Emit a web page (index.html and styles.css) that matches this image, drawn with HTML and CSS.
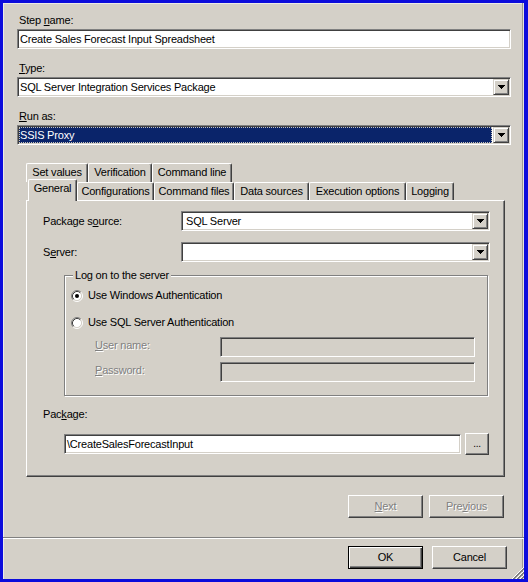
FILE: index.html
```html
<!DOCTYPE html>
<html>
<head>
<meta charset="utf-8">
<title>New Job Step</title>
<link rel="stylesheet" href="styles.css">
</head>
<body>
<div class="window">
  <div class="main">
    <div class="field">
      <span class="lbl">Step <u>n</u>ame:</span>
      <div class="sunken textbox">Create Sales Forecast Input Spreadsheet</div>
    </div>
    <div class="field">
      <span class="lbl"><u>T</u>ype:</span>
      <div class="sunken combo wide">
        <span class="ctext">SQL Server Integration Services Package</span>
        <span class="cbtn"><svg width="7" height="4" viewBox="0 0 7 4"><path d="M0 0h7v1H0zM1 1h5v1H1zM2 2h3v1H2zM3 3h1v1H3z" fill="#000"/></svg></span>
      </div>
    </div>
    <div class="field">
      <span class="lbl"><u>R</u>un as:</span>
      <div class="sunken combo wide">
        <span class="ctext focused">SSIS Proxy</span>
        <span class="cbtn"><svg width="7" height="4" viewBox="0 0 7 4"><path d="M0 0h7v1H0zM1 1h5v1H1zM2 2h3v1H2zM3 3h1v1H3z" fill="#000"/></svg></span>
      </div>
    </div>

    <div class="tabs">
      <div class="tabrow back">
        <span class="tab w62">Set values</span>
        <span class="tab w64">Verification</span>
        <span class="tab w80">Command line</span>
      </div>
      <div class="tabrow front">
        <span class="tab sel w49">General</span>
        <span class="tab w77">Configurations</span>
        <span class="tab w80">Command files</span>
        <span class="tab w75">Data sources</span>
        <span class="tab w97">Execution options</span>
        <span class="tab w48">Logging</span>
      </div>
      <div class="panel">
        <div class="prow">
          <span class="plbl">Package s<u>o</u>urce:</span>
          <div class="sunken combo pcombo">
            <span class="ctext">SQL Server</span>
            <span class="cbtn"><svg width="7" height="4" viewBox="0 0 7 4"><path d="M0 0h7v1H0zM1 1h5v1H1zM2 2h3v1H2zM3 3h1v1H3z" fill="#000"/></svg></span>
          </div>
        </div>
        <div class="prow second">
          <span class="plbl">S<u>e</u>rver:</span>
          <div class="sunken combo pcombo">
            <span class="ctext"></span>
            <span class="cbtn"><svg width="7" height="4" viewBox="0 0 7 4"><path d="M0 0h7v1H0zM1 1h5v1H1zM2 2h3v1H2zM3 3h1v1H3z" fill="#000"/></svg></span>
          </div>
        </div>

        <fieldset class="group">
          <legend>Log on to the server</legend>
          <div class="radio first">
            <svg width="12" height="12" viewBox="0 0 12 12">
              <circle cx="6" cy="6" r="4.5" fill="#fff"/>
              <path d="M2.11 9.89A5.5 5.5 0 0 1 9.89 2.11" fill="none" stroke="#808080"/>
              <path d="M9.89 2.11A5.5 5.5 0 0 1 2.11 9.89" fill="none" stroke="#fff"/>
              <path d="M2.82 9.18A4.5 4.5 0 0 1 9.18 2.82" fill="none" stroke="#404040"/>
              <path d="M9.18 2.82A4.5 4.5 0 0 1 2.82 9.18" fill="none" stroke="#d4d0c8"/>
              <circle cx="6" cy="6" r="2" fill="#000"/>
            </svg>
            <span>Use Windows Authentication</span>
          </div>
          <div class="radio next">
            <svg width="12" height="12" viewBox="0 0 12 12">
              <circle cx="6" cy="6" r="4.5" fill="#fff"/>
              <path d="M2.11 9.89A5.5 5.5 0 0 1 9.89 2.11" fill="none" stroke="#808080"/>
              <path d="M9.89 2.11A5.5 5.5 0 0 1 2.11 9.89" fill="none" stroke="#fff"/>
              <path d="M2.82 9.18A4.5 4.5 0 0 1 9.18 2.82" fill="none" stroke="#404040"/>
              <path d="M9.18 2.82A4.5 4.5 0 0 1 2.82 9.18" fill="none" stroke="#d4d0c8"/>
            </svg>
            <span>Use SQL Server Authentication</span>
          </div>
          <div class="cred first">
            <span class="clbl disabled"><u>U</u>ser name:</span>
            <div class="sunken cinput"></div>
          </div>
          <div class="cred next">
            <span class="clbl disabled"><u>P</u>assword:</span>
            <div class="sunken cinput"></div>
          </div>
        </fieldset>

        <div class="pkglbl">Pac<u>k</u>age:</div>
        <div class="pkgrow">
          <div class="sunken pkginput">\CreateSalesForecastInput</div>
          <span class="btn browse">...</span>
        </div>
      </div>
    </div>

    <div class="nav">
      <span class="btn disabled"><span><u>N</u>ext</span></span>
      <span class="btn disabled"><span>Pre<u>v</u>ious</span></span>
    </div>
  </div>

  <div class="sep"></div>

  <div class="footer">
    <span class="btn default">OK</span>
    <span class="btn">Cancel</span>
  </div>

  <svg class="grip" width="13" height="13" viewBox="0 0 13 13">
    <g stroke-width="1">
      <line x1="1" y1="13" x2="13" y2="1" stroke="#fff"/>
      <line x1="2" y1="13" x2="13" y2="2" stroke="#808080"/>
      <line x1="3" y1="13" x2="13" y2="3" stroke="#808080"/>
      <line x1="5" y1="13" x2="13" y2="5" stroke="#fff"/>
      <line x1="6" y1="13" x2="13" y2="6" stroke="#808080"/>
      <line x1="7" y1="13" x2="13" y2="7" stroke="#808080"/>
      <line x1="9" y1="13" x2="13" y2="9" stroke="#fff"/>
      <line x1="10" y1="13" x2="13" y2="10" stroke="#808080"/>
      <line x1="11" y1="13" x2="13" y2="11" stroke="#808080"/>
    </g>
  </svg>
</div>
</body>
</html>
```

FILE: styles.css
```css
* { box-sizing: border-box; }

body {
  margin: 0;
  font-family: "Liberation Sans", Arial, sans-serif;
  font-size: 11px;
  line-height: 13px;
  letter-spacing: -0.2px;
  color: #000;
  background: #d4d0c8;
}

.window {
  position: relative;
  width: 528px;
  height: 582px;
  background: #d4d0c8;
  border-style: solid;
  border-color: #0c0cdc;
  border-width: 3px 4px 3px 3px;
  box-shadow: inset -1px 0 0 #e6e4e0, inset -2px 0 0 #9c9a96, inset 1px 1px 0 #ecebe7;
  overflow: hidden;
}

.main {
  padding: 11px 0 0 14px;
}

.field + .field { margin-top: 13px; }

.lbl {
  display: block;
  height: 13px;
  margin: 0 0 2px 2px;
  white-space: nowrap;
}

.sunken {
  height: 20px;
  border: 1px solid;
  border-color: #808080 #fff #fff #808080;
  box-shadow: inset 1px 1px 0 #404040, inset -1px -1px 0 #d4d0c8;
  background: #fff;
  display: flex;
  align-items: center;
  white-space: nowrap;
}

.textbox { width: 494px; padding-left: 2px; }

.combo { padding: 1px; align-items: stretch; }
.wide { width: 494px; }

.ctext {
  flex: 1;
  padding-left: 1px;
  display: flex;
  align-items: center;
}

.ctext.focused {
  background: #0a246a;
  color: #fff;
  border: 1px dotted #c8c4bc;
  padding-left: 0;
  margin-right: 1px;
}

.cbtn {
  width: 16px;
  height: 16px;
  flex: none;
  background: #d4d0c8;
  border: 1px solid;
  border-color: #d4d0c8 #404040 #404040 #d4d0c8;
  box-shadow: inset 1px 1px 0 #fff, inset -1px -1px 0 #808080;
  display: flex;
  align-items: center;
  justify-content: center;
}
.cbtn svg { display: block; }

/* Tabs */
.tabs {
  margin: 18px 0 0 9px;
  width: 479px;
}

.tabrow { display: flex; }
.tabrow.back { height: 19px; }
.tabrow.front { height: 18px; padding-left: 2px; }

.tab {
  height: 100%;
  flex: none;
  background: #d4d0c8;
  border-top: 1px solid #fff;
  border-left: 1px solid #fff;
  border-right: 1px solid #404040;
  box-shadow: inset -1px 0 0 #808080;
  border-radius: 2px 2px 0 0;
  padding-top: 2px;
  text-align: center;
  white-space: nowrap;
}

.tab.sel {
  height: 22px;
  margin-top: -3px;
  position: relative;
  z-index: 1;
}

.w48 { width: 48px; }
.w49 { width: 49px; }
.w62 { width: 62px; }
.w64 { width: 64px; }
.w75 { width: 75px; }
.w77 { width: 77px; }
.w80 { width: 80px; }
.w97 { width: 97px; }

.panel {
  border: 1px solid;
  border-color: #fff #404040 #404040 #fff;
  box-shadow: inset -1px -1px 0 #808080;
  padding: 10px 0 21px 16px;
}

.prow {
  display: flex;
  align-items: center;
  height: 20px;
}
.prow.second { margin-top: 11px; }

.plbl { width: 138px; white-space: nowrap; }
.pcombo { width: 309px; }
.pcombo .ctext { padding-left: 3px; }

.group {
  margin: 7px 0 0 21px;
  width: 424px;
  min-width: 0;
  padding: 0 0 13px 0;
  border: 1px solid #808080;
  box-shadow: 1px 1px 0 #fff, inset 1px 1px 0 #fff;
}

.group legend {
  margin-left: 8px;
  padding: 0 2px;
  background: #d4d0c8;
  line-height: 13px;
}

.radio {
  display: flex;
  align-items: center;
  gap: 5px;
  height: 13px;
  margin-left: 6px;
}
.radio svg { display: block; flex: none; }
.radio.first { margin-top: 7px; }
.radio.next { margin-top: 14px; }

.cred {
  display: flex;
  align-items: flex-start;
  margin-left: 30px;
}
.cred.first { margin-top: 8px; }
.cred.next { margin-top: 5px; }

.clbl { width: 125px; margin-top: 2px; white-space: nowrap; }
.cinput { width: 255px; background: #d4d0c8; }

.disabled {
  color: #808080;
  text-shadow: 1px 1px 0 #fff;
}

.pkglbl { margin-top: 12px; height: 13px; }

.pkgrow {
  display: flex;
  align-items: center;
  gap: 4px;
  height: 22px;
  margin: 12px 0 0 21px;
}

.pkginput { width: 397px; padding-left: 2px; }

/* Buttons */
.btn {
  width: 75px;
  height: 23px;
  flex: none;
  background: #d4d0c8;
  border: 1px solid;
  border-color: #fff #404040 #404040 #fff;
  box-shadow: inset -1px -1px 0 #808080;
  display: flex;
  align-items: center;
  justify-content: center;
  white-space: nowrap;
}

.btn.browse {
  width: 24px;
  height: 22px;
  font-size: 10px;
  padding-bottom: 2px;
}

.btn.default {
  border-color: #000;
  box-shadow: inset 1px 1px 0 #fff, inset -1px -1px 0 #404040, inset -2px -2px 0 #808080;
}

.nav {
  display: flex;
  justify-content: flex-end;
  gap: 6px;
  width: 487px;
  margin-top: 18px;
}

.sep {
  margin-top: 19px;
  height: 2px;
  border-top: 1px solid #808080;
  border-bottom: 1px solid #fff;
}

.footer {
  display: flex;
  justify-content: flex-end;
  gap: 9px;
  padding: 7px 17px 0 0;
}

.grip {
  position: absolute;
  right: 0;
  bottom: 0;
  display: block;
}
```
